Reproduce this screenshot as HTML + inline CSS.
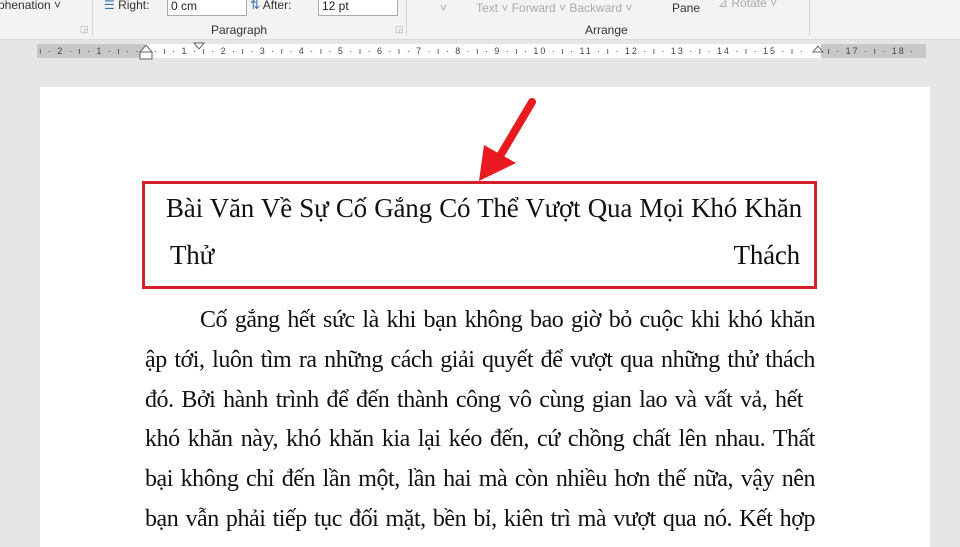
<!DOCTYPE html>
<html><head><meta charset="utf-8"><style>
*{margin:0;padding:0;box-sizing:border-box}
body{width:960px;height:540px;overflow:hidden;background:#e6e6e6;position:relative;font-family:"Liberation Sans",sans-serif}
.rib{position:absolute;left:0;top:0;width:960px;height:40px;background:#f3f3f3;border-bottom:1px solid #dadada}
.t{position:absolute;font-size:12px;color:#333;white-space:nowrap}
.g{color:#aaa}
.sep{position:absolute;top:0;width:1px;height:36px;background:#d6d6d6}
.inp{position:absolute;height:18px;top:-2px;border:1px solid #aaa;background:#fff;font-size:12px;padding-left:3px;color:#222}
.ruler{position:absolute;left:37px;top:44px;width:889px;height:14px;background:#fff}
.rg{position:absolute;top:0;height:14px;background:#c8c8c8}
.rn{position:absolute;top:0;font-size:9px;color:#444;line-height:14px;white-space:nowrap;letter-spacing:1.95px}
.page{position:absolute;left:40px;top:87px;width:890px;height:460px;background:#fff}
.box{position:absolute;left:142px;top:181px;width:675px;height:108px;border:3px solid #d3202b}
.ln{position:absolute;left:145px;width:670px;font-family:"Liberation Serif",serif;font-size:24px;color:#111;text-align:justify;text-align-last:justify;white-space:nowrap;line-height:26px;letter-spacing:-0.45px}
.ttl{font-size:27px;letter-spacing:-0.2px}
</style></head><body>
<div class="rib">
<div class="t" style="left:-2px;top:-2px">phenation ˅</div>
<div class="t g" style="left:80px;top:24px;font-size:9px">◲</div>
<div class="sep" style="left:92px"></div>
<div class="t" style="left:104px;top:-2px"><span style="color:#3a6fb0">☰</span> Right:</div>
<div class="inp" style="left:167px;width:80px">0 cm</div>
<div class="t" style="left:250px;top:-2px"><span style="color:#3a6fb0">⇅</span> After:</div>
<div class="inp" style="left:318px;width:80px">12 pt</div>
<div class="t" style="left:211px;top:23px">Paragraph</div>
<div class="t g" style="left:395px;top:24px;font-size:9px">◲</div>
<div class="sep" style="left:406px"></div>
<div class="t g" style="left:440px;top:1px">˅</div>
<div class="t g" style="left:476px;top:1px">Text ˅ Forward ˅ Backward ˅</div>
<div class="t" style="left:672px;top:1px">Pane</div>
<div class="t g" style="left:718px;top:-4px">⊿ Rotate ˅</div>
<div class="t" style="left:585px;top:23px">Arrange</div>
<div class="sep" style="left:809px"></div>
</div>
<div class="ruler">
<div class="rg" style="left:0;width:108px"></div>
<div class="rg" style="left:784px;width:105px"></div>
<div class="rn" style="left:2px">ı · 2 · ı · 1 · ı · ·&nbsp;&nbsp; · ı · 1 · ı · 2 · ı · 3 · ı · 4 · ı · 5 · ı · 6 · ı · 7 · ı · 8 · ı · 9 · ı · 10 · ı · 11 · ı · 12 · ı · 13 · ı · 14 · ı · 15 · ı · &nbsp; · ı · 17 · ı · 18 ·</div>
</div>
<svg style="position:absolute;left:0;top:40px" width="960" height="30">
<path d="M140 12 L146 5 L152 12 Z M140 12 h12 v7 h-12z" fill="#fff" stroke="#666" stroke-width="1"/>
<path d="M194 3 h10 l-5 6z" fill="#fff" stroke="#666"/>
<path d="M813 12 l5-6 5 6z" fill="#fff" stroke="#666"/>
</svg>
<div class="page"></div>
<svg style="position:absolute;left:0;top:0" width="960" height="540">
<path d="M532 102 L500 156" stroke="#e8191f" stroke-width="8" stroke-linecap="round"/>
<path d="M479 181 L484 145 L516 163 Z" fill="#e8191f"/>
</svg>
<div class="box"></div>
<div class="ln ttl" style="top:195px;left:166px;width:636px">Bài Văn Về Sự Cố Gắng Có Thể Vượt Qua Mọi Khó Khăn</div>
<div class="ln ttl" style="top:242px;left:170px;width:630px">Thử Thách</div>
<div class="ln" style="top:307px;left:200px;width:615px">Cố gắng hết sức là khi bạn không bao giờ bỏ cuộc khi khó khăn</div>
<div class="ln" style="top:347px">ập tới, luôn tìm ra những cách giải quyết để vượt qua những thử thách</div>
<div class="ln" style="top:387px;width:658px">đó. Bởi hành trình để đến thành công vô cùng gian lao và vất vả, hết</div>
<div class="ln" style="top:426px">khó khăn này, khó khăn kia lại kéo đến, cứ chồng chất lên nhau. Thất</div>
<div class="ln" style="top:466px">bại không chỉ đến lần một, lần hai mà còn nhiều hơn thế nữa, vậy nên</div>
<div class="ln" style="top:506px">bạn vẫn phải tiếp tục đối mặt, bền bỉ, kiên trì mà vượt qua nó. Kết hợp</div>
</body></html>
